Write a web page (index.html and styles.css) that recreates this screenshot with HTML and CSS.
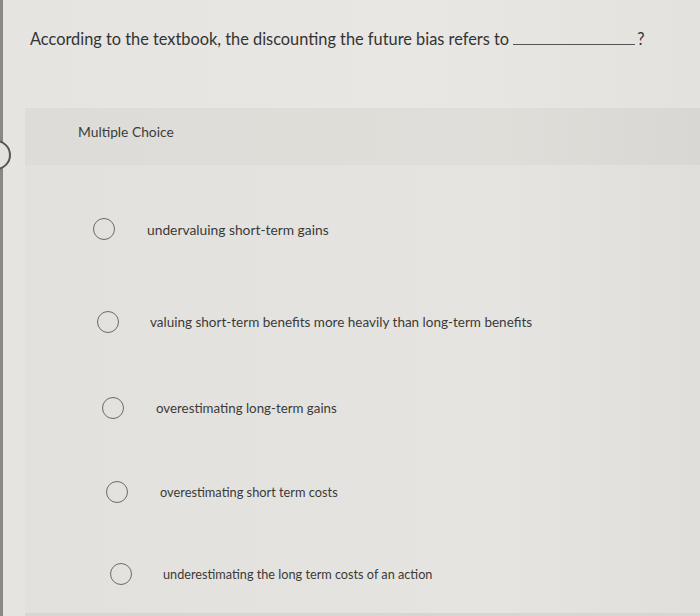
FILE: index.html
```html
<!DOCTYPE html>
<html>
<head>
<meta charset="utf-8">
<link rel="stylesheet" href="styles.css">
</head>
<body>
<div class="screen">
  <div class="edge-btn"></div>
  <header class="question">
    <p class="q-text">According to the textbook, the discounting the future bias refers to <span class="blank"></span>?</p>
  </header>
  <section class="panel">
    <div class="panel-head">Multiple Choice</div>
    <ul class="options">
      <li class="option o1"><span class="radio"></span><span class="label">undervaluing short-term gains</span></li>
      <li class="option o2"><span class="radio"></span><span class="label">valuing short-term benefits more heavily than long-term benefits</span></li>
      <li class="option o3"><span class="radio"></span><span class="label">overestimating long-term gains</span></li>
      <li class="option o4"><span class="radio"></span><span class="label">overestimating short term costs</span></li>
      <li class="option o5"><span class="radio"></span><span class="label">underestimating the long term costs of an action</span></li>
    </ul>
  </section>
</div>
</body>
</html>
```

FILE: styles.css
```css
html, body {
  margin: 0;
  padding: 0;
}
body {
  width: 700px;
  height: 616px;
  overflow: hidden;
  background: #e7e5e1;
  font-family: "Lato", "Liberation Sans", sans-serif;
  color: #3a3a3a;
}
.screen {
  position: relative;
  height: 616px;
  border-left: 3px solid #8a8885;
  box-sizing: border-box;
  display: flex;
  flex-direction: column;
  background: linear-gradient(90deg, #e6e4e0 0%, #e9e7e3 60%, #e4e2de 100%);
}
.edge-btn {
  position: absolute;
  left: -22px;
  top: 140px;
  width: 26px;
  height: 26px;
  border: 2px solid #555;
  border-radius: 50%;
  background: #e4e2de;
}
.question {
  padding: 29px 0 0 27px;
  height: 108px;
  box-sizing: border-box;
  flex: none;
}
.q-text {
  margin: 0;
  font-size: 16.35px;
  line-height: 20px;
  color: #333;
}
.blank {
  display: inline-block;
  width: 122px;
  border-bottom: 1px solid #555;
  height: 14px;
  margin-right: 2px;
}
.panel {
  flex: 1;
  margin-left: 22px;
  background: linear-gradient(90deg, #e3e1dd 0%, #e6e4e0 70%, #e1dfdb 100%);
  border-bottom: 3px solid #d8d6d2;
  display: flex;
  flex-direction: column;
}
.panel-head {
  height: 57px;
  box-sizing: border-box;
  padding: 15px 0 0 53px;
  font-size: 13.8px;
  line-height: 17px;
  color: #3c3c3c;
  background: linear-gradient(90deg, #dedcd8 0%, #e0ded9 70%, #d9d7d3 100%);
}
.options {
  list-style: none;
  margin: 0;
  padding: 0;
}
.option {
  display: flex;
  align-items: center;
  height: 40px;
  font-size: 13.5px;
  color: #3a3a3a;
}
.radio {
  width: 22px;
  height: 22px;
  border: 1.5px solid #6a6a6a;
  border-radius: 50%;
  box-sizing: border-box;
  flex: none;
}
.label {
  margin-left: 32px;
}
.o1 { margin-top: 44px; padding-left: 68px; font-size: 13.8px; }
.o2 { margin-top: 53px; padding-left: 72px; font-size: 13.5px; }
.o3 { margin-top: 46px; padding-left: 77px; font-size: 13.3px; }
.o4 { margin-top: 44px; padding-left: 81px; font-size: 12.8px; }
.o5 { margin-top: 42px; padding-left: 85px; font-size: 12.7px; }
.o2 .label { margin-left: 31px; }
.o3 .label { margin-left: 32px; }
.o4 .label { margin-left: 32px; }
.o5 .label { margin-left: 31px; }
```
